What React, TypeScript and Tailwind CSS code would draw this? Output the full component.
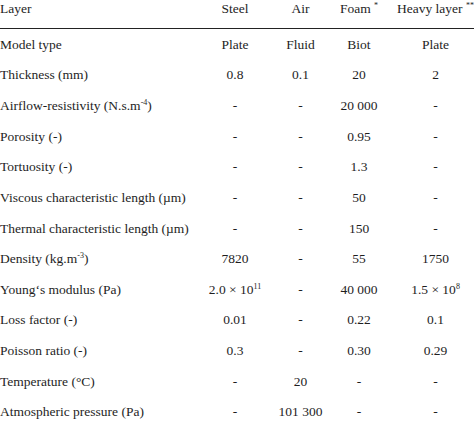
import React from 'react';

type Row = {
    label: React.ReactNode
    steel: React.ReactNode
    air: React.ReactNode
    foam: React.ReactNode
    heavy: React.ReactNode
}

const Sup: React.FC<{children: React.ReactNode}> = ({children}) => (
    <sup className="text-[8px] top-[-5px]">{children}</sup>
)

const rows: Row[] = [
    {label: "Model type", steel: "Plate", air: "Fluid", foam: "Biot", heavy: "Plate"},
    {label: "Thickness (mm)", steel: "0.8", air: "0.1", foam: "20", heavy: "2"},
    {label: <>Airflow-resistivity (N.s.m<Sup>-4</Sup>)</>, steel: "-", air: "-", foam: "20 000", heavy: "-"},
    {label: "Porosity (-)", steel: "-", air: "-", foam: "0.95", heavy: "-"},
    {label: "Tortuosity (-)", steel: "-", air: "-", foam: "1.3", heavy: "-"},
    {label: "Viscous characteristic length (µm)", steel: "-", air: "-", foam: "50", heavy: "-"},
    {label: "Thermal characteristic length (µm)", steel: "-", air: "-", foam: "150", heavy: "-"},
    {label: <>Density (kg.m<Sup>-3</Sup>)</>, steel: "7820", air: "-", foam: "55", heavy: "1750"},
    {label: "Young‘s modulus (Pa)", steel: <>2.0 × 10<Sup>11</Sup></>, air: "-", foam: "40 000", heavy: <>1.5 × 10<Sup>8</Sup></>},
    {label: "Loss factor (-)", steel: "0.01", air: "-", foam: "0.22", heavy: "0.1"},
    {label: "Poisson ratio (-)", steel: "0.3", air: "-", foam: "0.30", heavy: "0.29"},
    {label: "Temperature (°C)", steel: "-", air: "20", foam: "-", heavy: "-"},
    {label: "Atmospheric pressure (Pa)", steel: "-", air: "101 300", foam: "-", heavy: "-"},
]

const grid = "grid grid-cols-[202px_66px_65px_52px_89px]"

export default function App() {
    return (
        <div className="w-[474px] h-[421px] overflow-hidden bg-white text-[#1e1e1e] text-[13.5px] leading-none font-['Liberation_Serif','Times_New_Roman',serif]">
            {/* header */}
            <div className={`${grid} h-[27.5px] pt-[2px]`}>
                <div>Layer</div>
                <div className="text-center">Steel</div>
                <div className="text-center">Air</div>
                <div className="text-center whitespace-nowrap">Foam <Sup>*</Sup></div>
                <div className="text-center whitespace-nowrap pl-[12px]">Heavy layer <Sup>**</Sup></div>
            </div>
            <div className="h-[1.5px] bg-[#222]"/>
            {rows.map((r, i) => (
                <div key={i} className={`${grid} h-[30.67px] items-center`}>
                    <div className="whitespace-nowrap">{r.label}</div>
                    <div className="text-center whitespace-nowrap">{r.steel}</div>
                    <div className="text-center whitespace-nowrap">{r.air}</div>
                    <div className="text-center whitespace-nowrap">{r.foam}</div>
                    <div className="text-center whitespace-nowrap pl-[12px]">{r.heavy}</div>
                </div>
            ))}
        </div>
    );
}
